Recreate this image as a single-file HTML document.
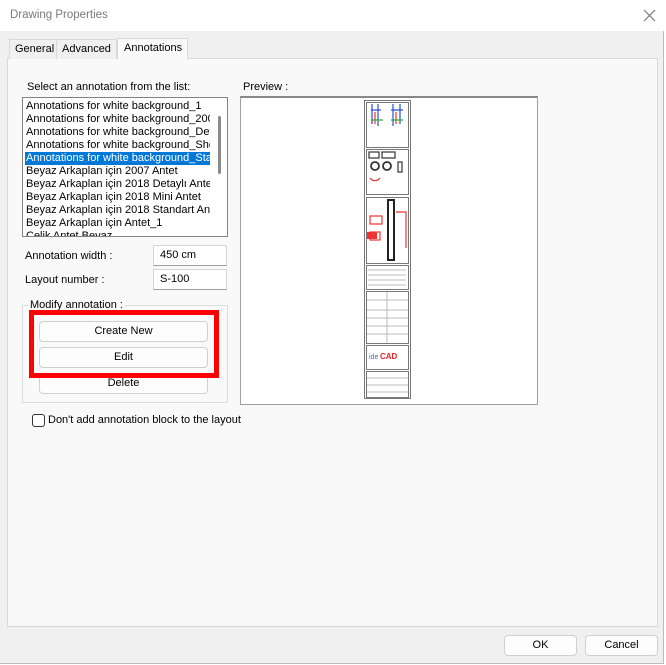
<!DOCTYPE html>
<html><head><meta charset="utf-8"><style>
*{box-sizing:border-box;margin:0;padding:0}
body{width:666px;height:665px;background:#fff;position:relative;overflow:hidden;font-family:"Liberation Sans",sans-serif;font-size:11px;color:#000}
.a{position:absolute}
.win{left:0;top:0;width:664px;height:664px;background:#f0f0f0;border-right:1px solid #bbb;border-bottom:1px solid #bbb}
.title{left:0;top:0;width:664px;height:31px;background:#fff}
.tab{height:20px;border:1px solid #d9d9d9;border-bottom:none;background:#f0f0f0;padding-left:5px;line-height:19px}
.btn{background:#fdfdfd;border:1px solid #d0d0d0;border-radius:4px;text-align:center;line-height:19px}
.inp{background:#fff;border:1px solid #d6d6d6;border-bottom:1px solid #a0a0a0;padding-left:6px;line-height:19px}
.li{position:absolute;left:2px;height:13px;line-height:13px;white-space:nowrap;width:185px;overflow:hidden;padding-left:1px}
</style></head><body>
<div class="a win"></div>
<div class="a title"></div>
<div class="a" style="left:10px;top:9px;color:#7a7a7a;font-size:11.5px">Drawing Properties</div>
<svg class="a" style="left:643px;top:9px" width="13" height="13"><path d="M1 1L12 12M12 1L1 12" stroke="#777" stroke-width="1.2"/></svg>
<div class="a" style="left:7px;top:58px;width:651px;height:569px;background:#f9f9f9;border:1px solid #d9d9d9"></div>
<div class="a tab" style="left:9px;top:39px;width:48px">General</div>
<div class="a tab" style="left:57px;top:39px;width:60px;border-left:none">Advanced</div>
<div class="a tab" style="left:117px;top:38px;width:71px;height:21px;background:#f9f9f9;padding-left:6px">Annotations</div>
<div class="a" style="left:27px;top:81px">Select an annotation from the list:</div>
<div class="a" style="left:22px;top:97px;width:206px;height:140px;background:#fff;border:1px solid #828282;overflow:hidden">
<div class="li" style="top:2px">Annotations for white background_1</div>
<div class="li" style="top:15px">Annotations for white background_2007</div>
<div class="li" style="top:28px">Annotations for white background_Detail</div>
<div class="li" style="top:41px">Annotations for white background_Short</div>
<div class="li" style="top:54px;background:#0078d7;color:#fff">Annotations for white background_Standard</div>
<div class="li" style="top:67px">Beyaz Arkaplan için 2007 Antet</div>
<div class="li" style="top:80px">Beyaz Arkaplan için 2018 Detaylı Antet</div>
<div class="li" style="top:93px">Beyaz Arkaplan için 2018 Mini Antet</div>
<div class="li" style="top:106px">Beyaz Arkaplan için 2018 Standart Antet</div>
<div class="li" style="top:119px">Beyaz Arkaplan için Antet_1</div>
<div class="li" style="top:132px">Çelik Antet Beyaz</div>
<div class="a" style="left:188px;top:0;width:17px;height:138px;background:#fff"></div>
<div class="a" style="left:195px;top:18px;width:3px;height:58px;background:#8a8a8a;border-radius:2px"></div>
</div>
<div class="a" style="left:25px;top:250px">Annotation width :</div>
<div class="a inp" style="left:153px;top:245px;width:74px;height:21px">450 cm</div>
<div class="a" style="left:25px;top:274px">Layout number :</div>
<div class="a inp" style="left:153px;top:269px;width:74px;height:21px">S-100</div>
<div class="a" style="left:22px;top:305px;width:206px;height:98px;border:1px solid #dcdcdc"></div>
<div class="a" style="left:28px;top:299px;background:#f9f9f9;padding:0 2px">Modify annotation :</div>
<div class="a btn" style="left:39px;top:321px;width:169px;height:21px">Create New</div>
<div class="a btn" style="left:39px;top:347px;width:169px;height:21px">Edit</div>
<div class="a btn" style="left:39px;top:373px;width:169px;height:21px">Delete</div>
<div class="a" style="left:29px;top:310px;width:190px;height:68px;border:5px solid #ff0000"></div>
<div class="a" style="left:32px;top:414px;width:13px;height:13px;border:1px solid #333;border-radius:3px;background:#fff"></div>
<div class="a" style="left:48px;top:414px">Don't add annotation block to the layout</div>
<div class="a" style="left:243px;top:81px">Preview :</div>
<div class="a" style="left:240px;top:96px;width:298px;height:309px;background:#fff;border:1px solid #a0a0a0;border-top:2px solid #888"></div>
<svg class="a" style="left:0;top:0" width="666" height="665">
<g fill="none" stroke="#777" stroke-width="1">
<rect x="364.5" y="100.5" width="46" height="298"/>
<rect x="366.5" y="102.5" width="42" height="45"/>
<rect x="366.5" y="149.5" width="42" height="45"/>
<rect x="366.5" y="197.5" width="42" height="66"/>
<rect x="366.5" y="265.5" width="42" height="24"/>
<rect x="366.5" y="291.5" width="42" height="52"/>
<rect x="366.5" y="345.5" width="42" height="24"/>
<rect x="366.5" y="371.5" width="42" height="26"/>
</g>
<g stroke="#bbb" stroke-width="1">
<line x1="367" y1="300" x2="408" y2="300"/><line x1="367" y1="310" x2="408" y2="310"/>
<line x1="367" y1="318" x2="408" y2="318"/><line x1="367" y1="326" x2="408" y2="326"/>
<line x1="367" y1="334" x2="408" y2="334"/><line x1="387" y1="292" x2="387" y2="343"/>
<line x1="367" y1="378" x2="408" y2="378"/><line x1="367" y1="385" x2="408" y2="385"/>
<line x1="367" y1="392" x2="408" y2="392"/>
<line x1="368" y1="270" x2="406" y2="270"/><line x1="368" y1="275" x2="406" y2="275"/>
<line x1="368" y1="280" x2="406" y2="280"/><line x1="368" y1="285" x2="406" y2="285"/>
</g>
<g stroke-width="1.2" fill="none">
<path d="M372 104v20M378 104v22M371 110h10M393 104v22M400 104v20M391 110h12" stroke="#2b4fd6"/>
<path d="M375 112v12M396 112v12" stroke="#e33"/>
<path d="M371 120h12M391 120h12" stroke="#3a3"/>
<circle cx="375" cy="166" r="4" stroke="#333" stroke-width="1.8"/>
<circle cx="387" cy="166" r="4" stroke="#333" stroke-width="1.8"/>
<rect x="369" y="152" width="10" height="6" stroke="#333"/>
<rect x="382" y="152" width="13" height="6" stroke="#333"/>
<rect x="398" y="162" width="4" height="10" stroke="#333"/>
<path d="M370 178a6 6 0 0 0 10 0" stroke="#e33"/>
<rect x="388" y="200" width="6" height="60" stroke="#222" stroke-width="2"/>
<rect x="370" y="216" width="12" height="8" stroke="#e33"/>
<rect x="370" y="232" width="10" height="8" stroke="#e33"/>
<path d="M396 212h10v36" stroke="#e33"/>
</g>
<rect x="367" y="232" width="10" height="7" fill="#e33"/>
<text x="369" y="359" font-family="Liberation Sans" font-size="7" fill="#3d6fbf">ide</text>
<text x="380" y="359" font-family="Liberation Sans" font-size="8" font-weight="bold" fill="#e22">CAD</text>
</svg>
<div class="a btn" style="left:504px;top:635px;width:73px;height:21px">OK</div>
<div class="a btn" style="left:585px;top:635px;width:73px;height:21px">Cancel</div>
</body></html>
